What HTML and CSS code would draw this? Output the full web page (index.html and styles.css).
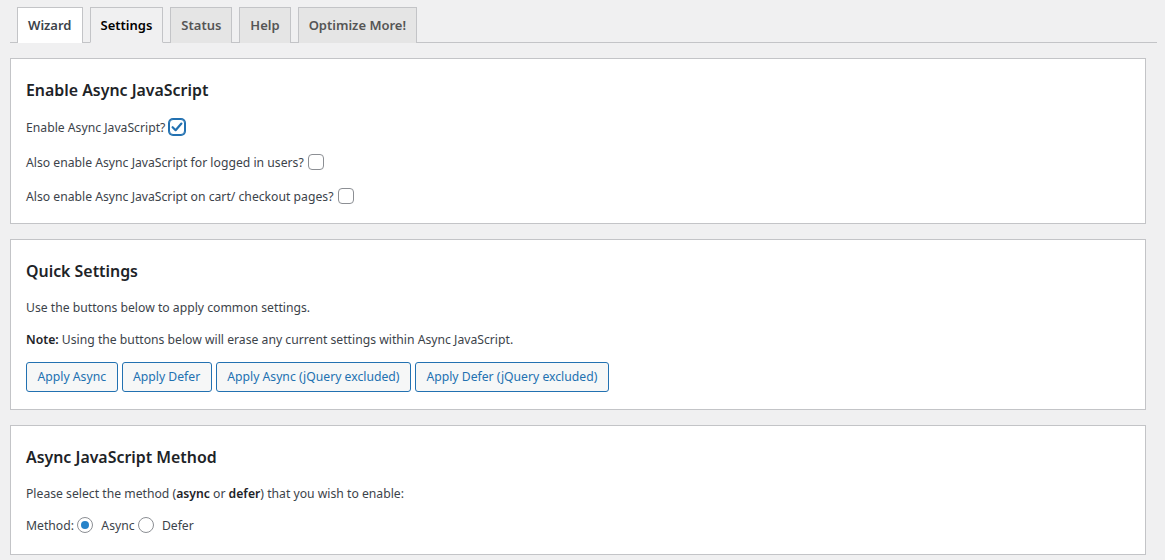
FILE: index.html
```html
<!DOCTYPE html>
<html lang="en">
<head>
    <meta charset="UTF-8">
    <title>Async JavaScript Settings</title>
    <link rel="stylesheet" href="styles.css">
</head>
<body>
    <div class="wrap">
        <nav class="nav-tab-wrapper">
            <a class="nav-tab nav-tab-hover" href="#">Wizard</a>
            <a class="nav-tab nav-tab-active" href="#">Settings</a>
            <a class="nav-tab" href="#">Status</a>
            <a class="nav-tab" href="#">Help</a>
            <a class="nav-tab" href="#">Optimize More!</a>
        </nav>

        <div class="panel">
            <h2>Enable Async JavaScript</h2>
            <p class="row">Enable Async JavaScript? <span class="checkbox checked"><svg viewBox="0 0 16 16" width="16" height="16"><path d="M3.6 8.2 L6.6 11.2 L12.4 4.6" fill="none" stroke="#2271b1" stroke-width="2.2" stroke-linecap="round" stroke-linejoin="round"/></svg></span></p>
            <p class="row">Also enable Async JavaScript for logged in users? <span class="checkbox"></span></p>
            <p class="row">Also enable Async JavaScript on cart/ checkout pages? <span class="checkbox"></span></p>
        </div>

        <div class="panel">
            <h2>Quick Settings</h2>
            <p>Use the buttons below to apply common settings.</p>
            <p class="note"><strong>Note:</strong> Using the buttons below will erase any current settings within Async JavaScript.</p>
            <div class="buttons">
                <button class="button">Apply Async</button>
                <button class="button">Apply Defer</button>
                <button class="button">Apply Async (jQuery excluded)</button>
                <button class="button">Apply Defer (jQuery excluded)</button>
            </div>
        </div>

        <div class="panel">
            <h2>Async JavaScript Method</h2>
            <p>Please select the method (<strong>async</strong> or <strong>defer</strong>) that you wish to enable:</p>
            <p class="method">Method: <span class="radio checked"></span> Async <span class="radio"></span> Defer</p>
        </div>
    </div>
</body>
</html>
```

FILE: styles.css
```css
body {
    margin: 0;
    background-color: #f0f0f1;
    color: #3c434a;
    font-family: "Segoe UI", "Noto Sans", sans-serif;
    font-size: 12.2px;
    line-height: 19.5px;
}
.wrap {
    margin: 0 8px 0 10px;
    padding-top: 7px;
}
.nav-tab-wrapper {
    display: flex;
    border-bottom: 1px solid #c3c4c7;
    margin-bottom: 15px;
}
.nav-tab {
    display: block;
    margin-left: 7px;
    margin-bottom: -1px;
    padding: 5px 10px;
    border: 1px solid #c3c4c7;
    border-bottom: none;
    background-color: #e5e5e5;
    color: #555;
    font-size: 13px;
    font-weight: 600;
    line-height: 24px;
    text-decoration: none;
}
.nav-tab-hover {
    background-color: #fff;
    color: #3c434a;
}
.nav-tab-active {
    background-color: #f0f0f1;
    color: #000;
    border-bottom: 1px solid #f0f0f1;
}
.panel {
    background-color: #fff;
    border: 1px solid #c3c4c7;
    margin: 0 11px 15px 0;
    padding: 3px 15px;
}
.panel h2 {
    margin: 16px 0 15px;
    color: #1d2327;
    font-size: 15.9px;
    font-weight: 600;
    line-height: 24px;
}
.panel p {
    margin: 13px 0;
}
.panel strong {
    font-weight: 600;
    color: #1d2327;
}
.panel .row {
    line-height: 21.5px;
}
.panel .row:last-child {
    margin-bottom: 12px;
}
.panel .note {
    margin-bottom: 12px;
}
.panel .method {
    margin-bottom: 15px;
}
.checkbox {
    display: inline-block;
    box-sizing: border-box;
    width: 16px;
    height: 16px;
    border: 1px solid #8c8f94;
    border-radius: 4px;
    background-color: #fff;
    vertical-align: middle;
    margin: -3px 0 0 1px;
}
.checkbox svg {
    display: block;
    margin: -1px;
}
.checkbox.checked {
    border-color: #2271b1;
    box-shadow: 0 0 0 1px #2271b1;
}
.buttons {
    display: flex;
    gap: 4px;
    margin: 12px 0 14px;
}
.button {
    box-sizing: border-box;
    height: 30px;
    padding: 0 10.5px;
    border: 1px solid #2271b1;
    border-radius: 3px;
    background-color: #f6f7f7;
    color: #2271b1;
    font-family: inherit;
    font-size: 12.2px;
    line-height: 28px;
    cursor: pointer;
}
.radio {
    display: inline-block;
    box-sizing: border-box;
    position: relative;
    width: 16px;
    height: 16px;
    border: 1px solid #8c8f94;
    border-radius: 50%;
    background-color: #fff;
    vertical-align: middle;
    margin: -3px 5px 0 0;
}
.radio.checked::after {
    content: "";
    position: absolute;
    top: 3px;
    left: 3px;
    width: 8px;
    height: 8px;
    border-radius: 50%;
    background-color: #2783c9;
}
```
